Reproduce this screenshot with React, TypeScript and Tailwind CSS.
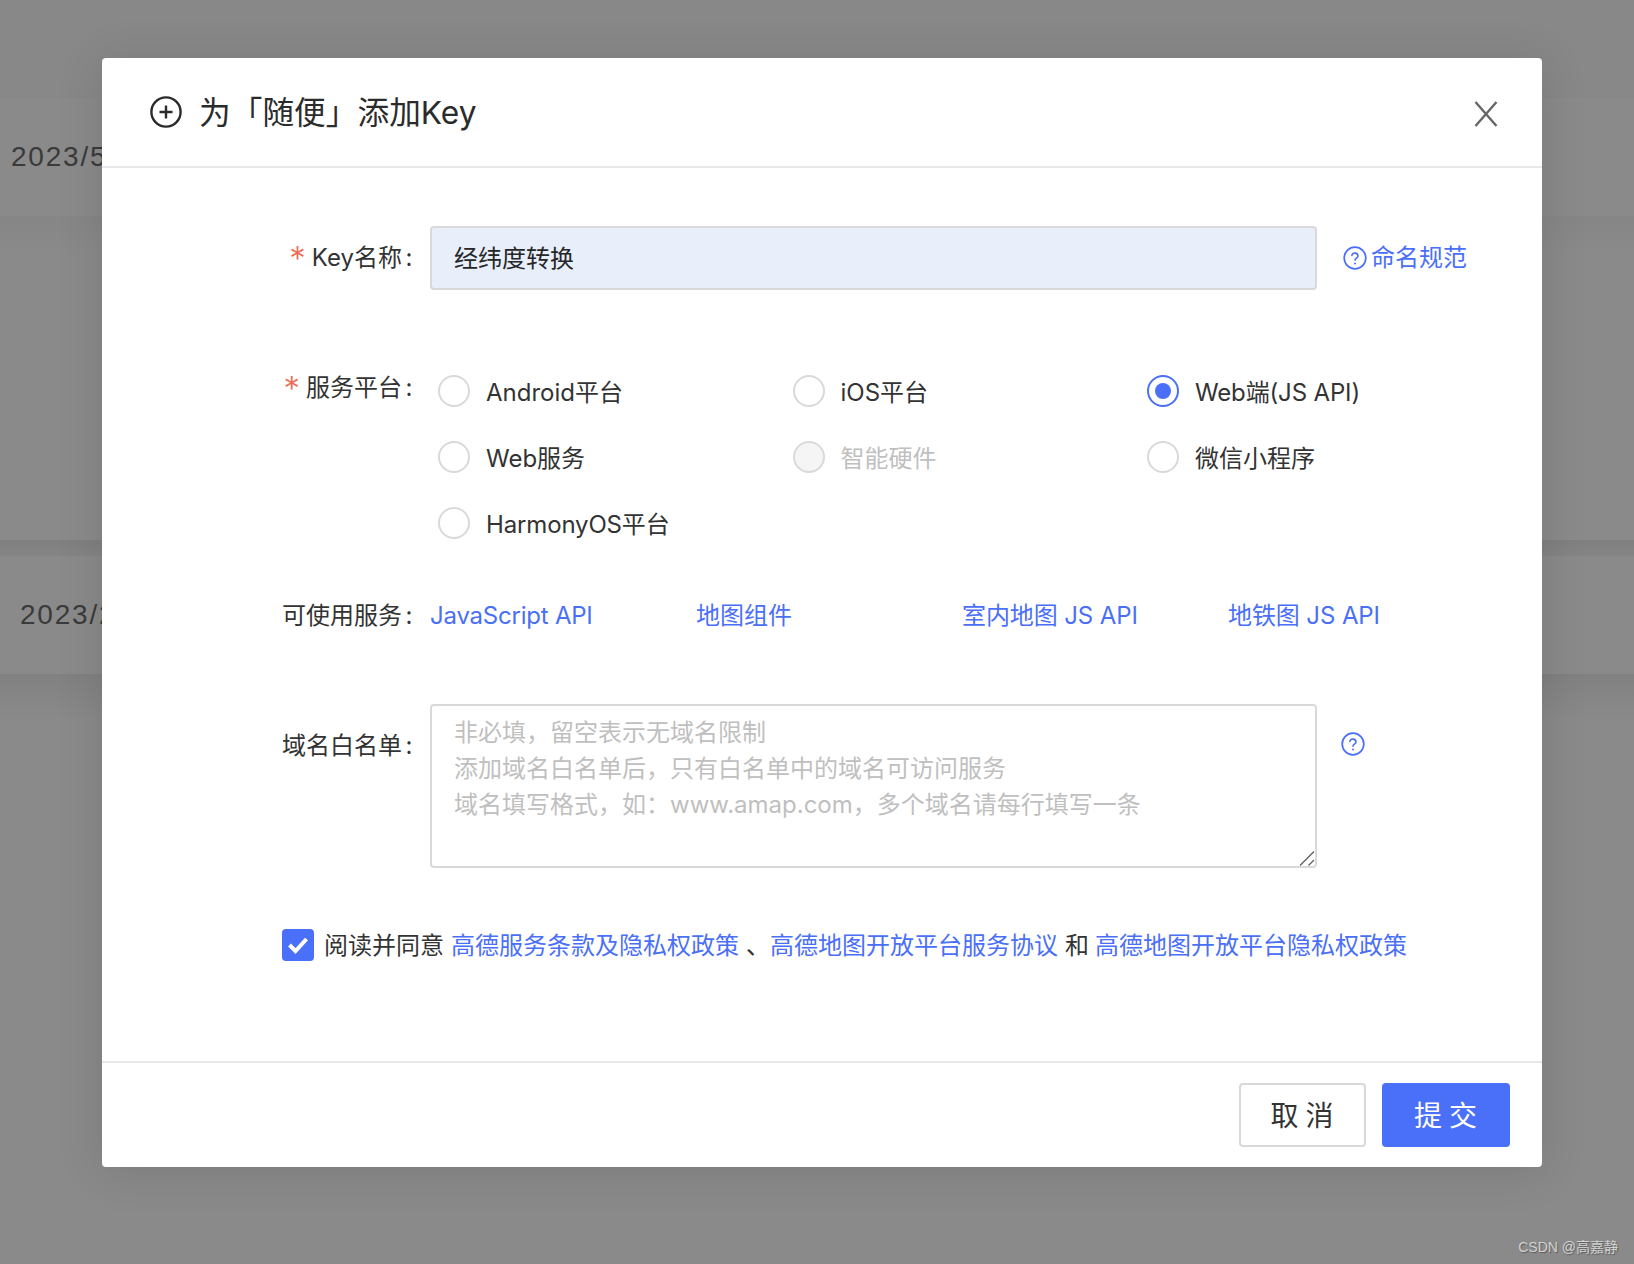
import React from "react";

const BLUE = "text-[#4a6ff8]";

function Help() {
  return (
    <svg width="24" height="24" viewBox="0 0 24 24" fill="none" className="shrink-0 text-[#4a6ff8]" stroke="currentColor">
      <circle cx="12" cy="12" r="10.8" strokeWidth="1.7" />
      <path d="M8.9 9.4a3.1 3.1 0 0 1 6.1.6c0 2.1-3 2.3-3 4.2" strokeWidth="1.6" strokeLinecap="round" />
      <circle cx="12" cy="17.4" r="1" fill="currentColor" stroke="none" />
    </svg>
  );
}

function Label({ children, required }: { children: React.ReactNode; required?: boolean }) {
  return (
    <div className="w-[148px] shrink-0 pr-[14px] flex justify-end items-center whitespace-nowrap text-[24px] leading-[36px] text-[#333]">
      {required && <span className="shrink-0 text-[#ef6c52] text-[33px] font-light leading-[36px] mr-[6px]">*</span>}
      <span className="shrink-0">{children}</span>
      <span className="shrink-0 w-[14px] text-center">:</span>
    </div>
  );
}

function Radio({ label, checked, disabled, narrow }: { label: string; checked?: boolean; disabled?: boolean; narrow?: boolean }) {
  return (
    <div className="h-[66px] flex items-center">
      <span
        className={`w-[32px] h-[32px] rounded-full border-2 flex items-center justify-center shrink-0 ${
          checked ? "border-[#4a6ff8]" : "border-[#d9d9d9]"
        } ${disabled ? "bg-[#f5f5f5]" : "bg-white"}`}
      >
        {checked && <span className="w-[16px] h-[16px] rounded-full bg-[#4a6ff8]" />}
      </span>
      <span
        className={`ml-[16px] text-[24px] leading-[36px] mt-[4px] ${narrow ? "tracking-[-0.15px]" : ""} ${
          disabled ? "text-[#bfbfbf]" : "text-[#333]"
        }`}
      >
        {label}
      </span>
    </div>
  );
}

export default function App() {
  return (
    <div className="relative h-[1264px] w-[1634px] overflow-hidden bg-[#888888] font-['Inter','Noto_Sans_CJK_SC',sans-serif]">
      {/* page behind the overlay */}
      <div className="flex flex-col h-full pt-[98px] font-['Liberation_Sans',sans-serif] text-[28px] text-[#3a3a3a]">
        <div className="h-[118px] bg-[#8a8a8a] pl-[11px] pt-[40px] leading-[38px] tracking-[1.8px]">2023/5</div>
        <div className="h-[324px] bg-gradient-to-b from-[#868686] to-[#8a8a8a] to-[12%]" />
        <div className="h-[16px] bg-gradient-to-b from-[#808080] to-[#858585]" />
        <div className="h-[118px] bg-[#8a8a8a] pl-[20px] pt-[40px] leading-[38px] tracking-[1.8px]">2023/2</div>
        <div className="flex-1 bg-gradient-to-b from-[#818181] to-[#8a8a8a] to-[8%]" />
      </div>

      {/* dialog */}
      <div className="absolute left-[102px] top-[58px] w-[1440px] h-[1109px] bg-white rounded-[4px] flex flex-col shadow-[0_4px_48px_rgba(0,0,0,0.12)]">
        <div className="h-[110px] shrink-0 border-b-2 border-[#e8e8e8] flex items-center pl-[48px] pr-[43px]">
          <svg width="32" height="32" viewBox="0 0 32 32" fill="none" stroke="#2b2b2b" strokeWidth="2.4" className="shrink-0">
            <circle cx="16" cy="16" r="14.6" />
            <path d="M16 9.5v13M9.5 16h13" strokeWidth="2.4" />
          </svg>
          <div className="ml-[17px] mt-[2px] text-[31.7px] leading-[40px] text-[#2b2b2b]">为「随便」添加Key</div>
          <svg width="26" height="26" viewBox="0 0 26 26" fill="none" stroke="#666" strokeWidth="2.4" className="ml-auto mt-[3px]">
            <path d="M2.5 1l21 24M23.5 1l-21 24" />
          </svg>
        </div>

        <div className="flex-1 pl-[180px]">
          <div className="mt-[58px] flex items-center h-[64px]">
            <Label required>Key名称</Label>
            <input
              readOnly
              value="经纬度转换"
              className="w-[887px] h-[64px] border-2 border-[#d9d9d9] rounded-[4px] bg-[#e8effb] px-[22px] pb-[4px] text-[24px] text-[#262626] outline-none"
            />
            <div className="ml-[26px] flex items-center">
              <Help />
              <span className={`ml-[4px] text-[24px] leading-[36px] ${BLUE}`}>命名规范</span>
            </div>
          </div>

          <div className="mt-[68px] flex items-start">
            <div className="pt-[12px]">
              <Label required>服务平台</Label>
            </div>
            <div className="ml-[8px] grid grid-cols-[354.5px_354.5px_354.5px]">
              <Radio label="Android平台" />
              <Radio label="iOS平台" />
              <Radio label="Web端(JS API)" checked narrow />
              <Radio label="Web服务" />
              <Radio label="智能硬件" disabled />
              <Radio label="微信小程序" />
              <Radio label="HarmonyOS平台" narrow />
            </div>
          </div>

          <div className="mt-[42px] flex items-center h-[36px]">
            <Label>可使用服务</Label>
            <div className={`grid grid-cols-[266px_266px_266px_266px] text-[24px] leading-[36px] ${BLUE}`}>
              <span className="tracking-[-0.22px]">JavaScript API</span>
              <span>地图组件</span>
              <span className="tracking-[-0.1px]">室内地图 JS API</span>
              <span className="tracking-[-0.1px]">地铁图 JS API</span>
            </div>
          </div>

          <div className="mt-[70px] flex items-start">
            <div className="pt-[24px]">
              <Label>域名白名单</Label>
            </div>
            <div className="relative flex">
              <textarea
                readOnly
                placeholder={"非必填，留空表示无域名限制\n添加域名白名单后，只有白名单中的域名可访问服务\n域名填写格式，如：www.amap.com，多个域名请每行填写一条"}
                className="resize-none w-[887px] h-[164px] border-2 border-[#d9d9d9] rounded-[4px] bg-white px-[22px] py-[9px] text-[24px] leading-[36px] text-[#333] placeholder:text-[#bfbfbf] placeholder:opacity-100 outline-none"
              />
              <svg width="16" height="16" viewBox="0 0 16 16" fill="none" stroke="#5f5f5f" strokeWidth="1.3" className="absolute right-[2px] bottom-[2px]">
                <path d="M1 15.5L15 1.5M9.5 15.5L15 10" />
              </svg>
            </div>
            <div className="ml-[24px] mt-[28px]">
              <Help />
            </div>
          </div>

          <div className="mt-[61px] flex items-center h-[32px] text-[24px] leading-[36px] text-[#333]">
            <span className="w-[32px] h-[32px] rounded-[4px] bg-[#4a6ff8] flex items-center justify-center shrink-0">
              <svg width="22" height="18" viewBox="0 0 22 18" fill="none" stroke="#fff" strokeWidth="4">
                <path d="M2.5 9l6 6L19.5 3" />
              </svg>
            </span>
            <div className="flex items-center mt-[2px]">
              <span className="ml-[10px]">阅读并同意</span>
              <span className={`ml-[7px] ${BLUE}`}>高德服务条款及隐私权政策</span>
              <span className="ml-[7px] w-[24px]">、</span>
              <span className={BLUE}>高德地图开放平台服务协议</span>
              <span className="ml-[7px]">和</span>
              <span className={`ml-[6px] ${BLUE}`}>高德地图开放平台隐私权政策</span>
            </div>
          </div>
        </div>

        <div className="h-[106px] shrink-0 border-t-2 border-[#e8e8e8] flex items-start justify-end pt-[20px] pr-[32px] gap-[16px]">
          <button className="w-[127px] h-[64px] border-2 border-[#d9d9d9] rounded-[4px] bg-white pl-[6px] pt-[2px] text-[28px] tracking-[7px] text-[#333]">取消</button>
          <button className="w-[128px] h-[64px] rounded-[4px] bg-[#4a6ff8] pl-[6px] pt-[2px] text-[28px] tracking-[7px] text-white">提交</button>
        </div>
      </div>

      <div className="absolute right-[16px] bottom-[8px] text-[14px] leading-[18px] font-['Liberation_Sans','Noto_Sans_CJK_SC',sans-serif] text-[#d4d4d4] [text-shadow:1px_1px_1px_rgba(0,0,0,0.35)]">
        CSDN @高嘉静
      </div>
    </div>
  );
}
